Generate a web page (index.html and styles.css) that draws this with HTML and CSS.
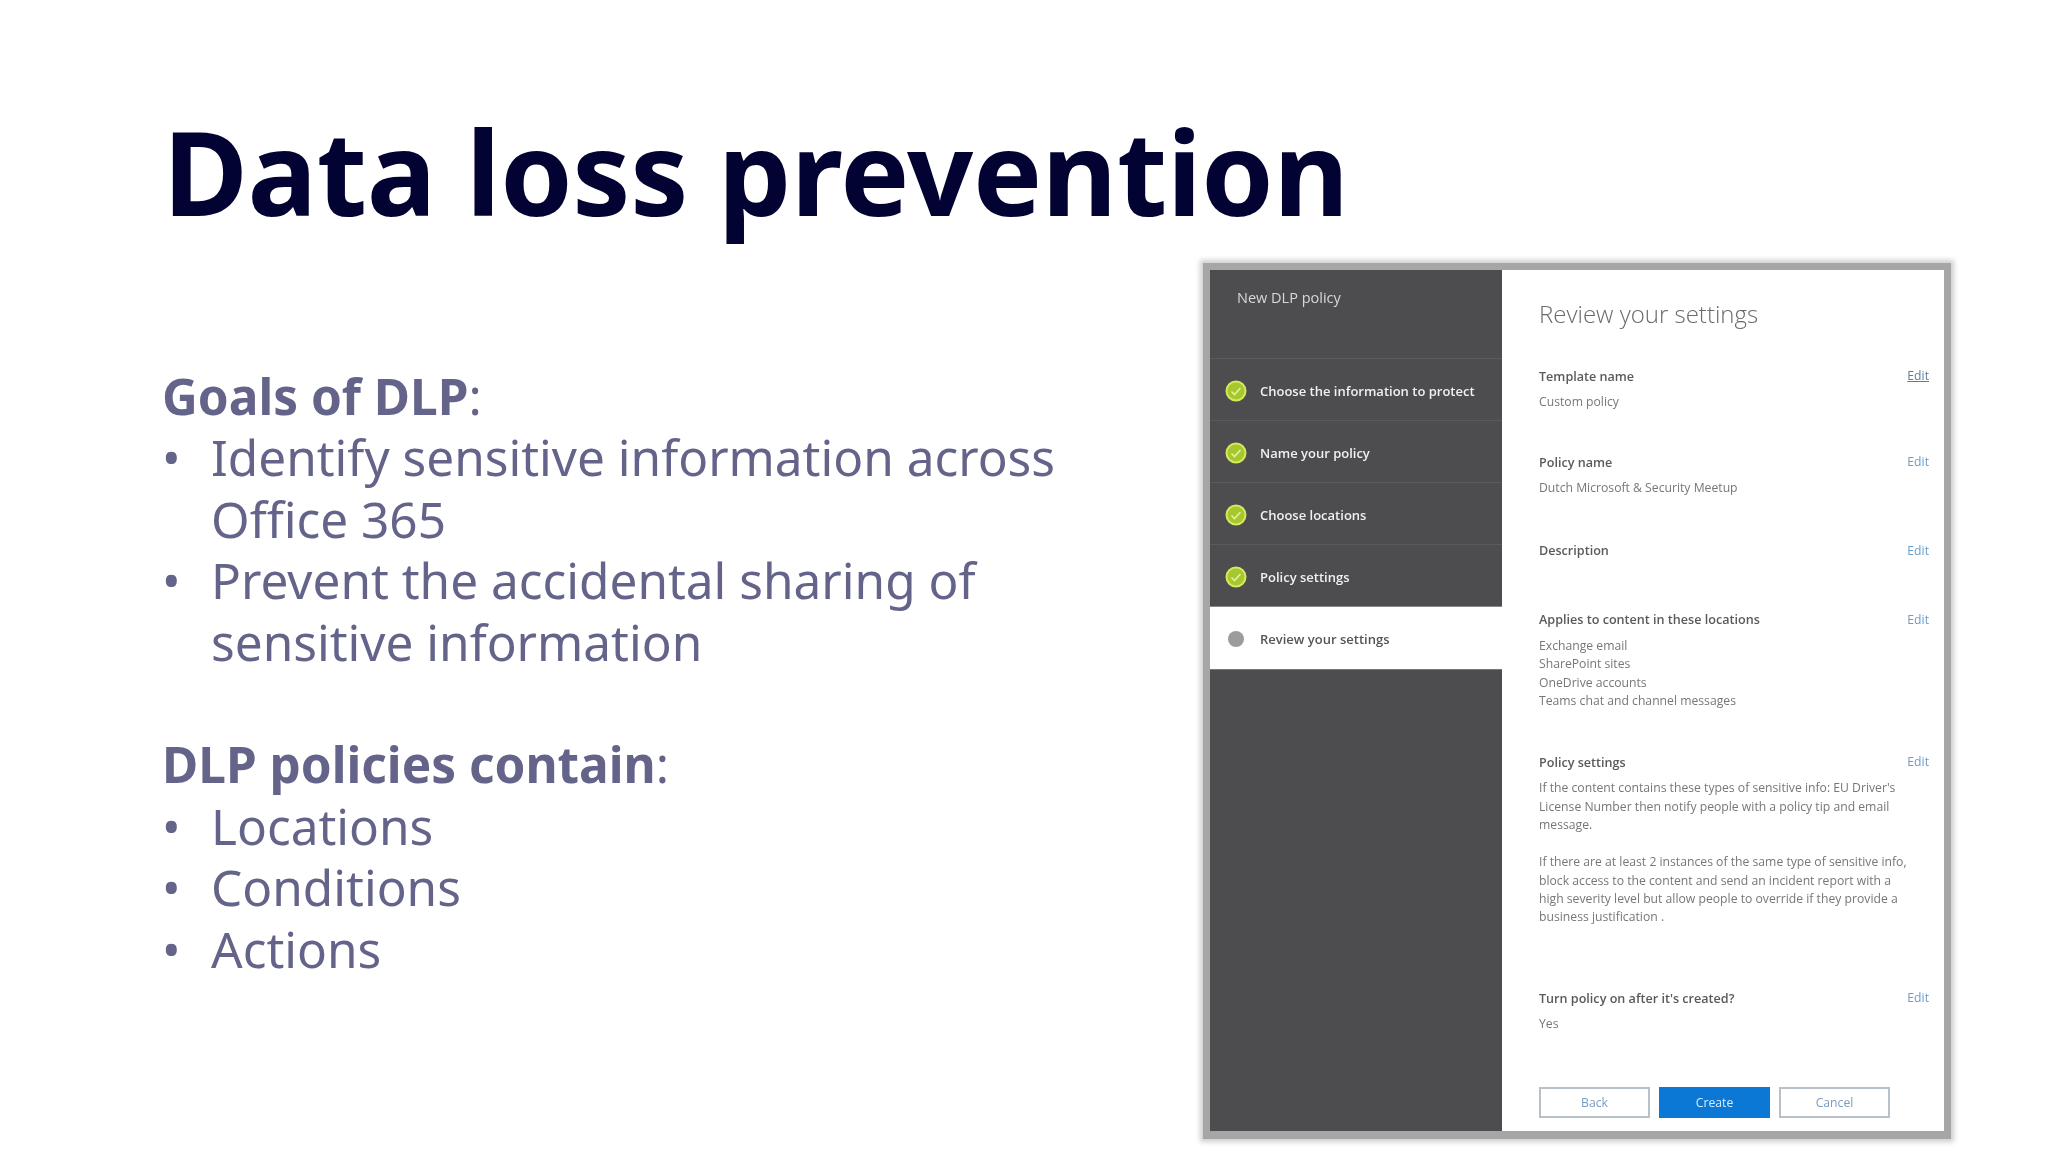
FILE: index.html
```html
<!DOCTYPE html>
<html lang="en">
<head>
<meta charset="utf-8">
<title>Data loss prevention</title>
<link rel="stylesheet" href="styles.css">
</head>
<body>
<main class="slide">
  <h1 class="title">Data loss prevention</h1>
  <div class="columns">
    <section class="copy">
      <p class="lead"><b>Goals of DLP</b>:</p>
      <ul class="points">
        <li><span>Identify sensitive information across<br>Office 365</span></li>
        <li><span>Prevent the accidental sharing of<br>sensitive information</span></li>
      </ul>
      <p class="lead spaced"><b>DLP policies contain</b>:</p>
      <ul class="points">
        <li><span>Locations</span></li>
        <li><span>Conditions</span></li>
        <li><span>Actions</span></li>
      </ul>
    </section>
    <figure class="shot">
      <div class="shot-inner">
        <aside class="wizard">
          <div class="wizard-title">New DLP policy</div>
          <div class="step"><svg class="tick" viewBox="0 0 22 22"><circle cx="11" cy="11" r="9.5"/><path d="M6.5 11.5l3 3 6-6.5"/></svg><span>Choose the information to protect</span></div>
          <div class="step"><svg class="tick" viewBox="0 0 22 22"><circle cx="11" cy="11" r="9.5"/><path d="M6.5 11.5l3 3 6-6.5"/></svg><span>Name your policy</span></div>
          <div class="step"><svg class="tick" viewBox="0 0 22 22"><circle cx="11" cy="11" r="9.5"/><path d="M6.5 11.5l3 3 6-6.5"/></svg><span>Choose locations</span></div>
          <div class="step"><svg class="tick" viewBox="0 0 22 22"><circle cx="11" cy="11" r="9.5"/><path d="M6.5 11.5l3 3 6-6.5"/></svg><span>Policy settings</span></div>
          <div class="step current"><i class="dot"></i><span>Review your settings</span></div>
        </aside>
        <div class="review">
          <h2 class="review-title">Review your settings</h2>
          <div class="block b1"><div class="row"><h3>Template name</h3><a class="hover">Edit</a></div><p>Custom policy</p></div>
          <div class="block b2"><div class="row"><h3>Policy name</h3><a>Edit</a></div><p>Dutch Microsoft &amp; Security Meetup</p></div>
          <div class="block b3"><div class="row"><h3>Description</h3><a>Edit</a></div></div>
          <div class="block b4"><div class="row"><h3>Applies to content in these locations</h3><a>Edit</a></div><p>Exchange email<br>SharePoint sites<br>OneDrive accounts<br>Teams chat and channel messages</p></div>
          <div class="block b5"><div class="row"><h3>Policy settings</h3><a>Edit</a></div><p>If the content contains these types of sensitive info: EU Driver's<br>License Number then notify people with a policy tip and email<br>message.</p><p class="gap">If there are at least 2 instances of the same type of sensitive info,<br>block access to the content and send an incident report with a<br>high severity level but allow people to override if they provide a<br>business justification .</p></div>
          <div class="block b6"><div class="row"><h3>Turn policy on after it's created?</h3><a>Edit</a></div><p>Yes</p></div>
          <div class="actions"><button class="btn">Back</button><button class="btn primary">Create</button><button class="btn">Cancel</button></div>
        </div>
      </div>
    </figure>
  </div>
</main>
</body>
</html>
```
FILE: styles.css
```css
* { box-sizing: border-box; }
html, body { margin: 0; background: #fff; }
.slide { width: 2048px; height: 1152px; overflow: hidden; padding: 101px 0 0 163px; font-family: "Noto Sans", sans-serif; }
.title { margin: 0; font-size: 116px; line-height: 140px; font-weight: 700; color: #020233; letter-spacing: -.3px; }
.columns { display: flex; justify-content: space-between; align-items: flex-start; margin-top: 22px; padding-right: 97px; }
.copy { margin: 103px 0 0 -1px; color: #64648a; font-size: 49.5px; line-height: 61.4px; }
.lead { margin: 0; }
.lead.spaced { margin-top: 61.4px; }
.points { margin: 0; padding: 0; list-style: none; }
.points li { display: flex; }
.points li::before { content: "•"; flex: none; width: 49px; }
.shot { margin: 0; width: 748px; height: 876px; padding: 7px 7px 8px; background: #a6a6a6; box-shadow: 0 0 5px 3px #cfcfcf; }
.shot-inner { display: flex; height: 100%; background: #fff; filter: blur(.7px); font-family: "Open Sans", sans-serif; }
.wizard { width: 292px; flex: none; background: #4d4d4f; color: #f0f0f0; }
.wizard-title { height: 88px; padding: 18px 0 0 27px; font-size: 14.5px; line-height: 20px; color: #d8d8d8; }
.step { height: 62px; display: flex; align-items: center; gap: 13px; padding: 2px 0 0 15px; font-size: 13px; font-weight: 600; border-top: 1px solid #5a5a5c; }
.step.current { height: 64px; background: #fff; color: #555; border-top: 1px solid #888; border-bottom: 1px solid #777; }
.tick { width: 22px; height: 22px; flex: none; }
.tick circle { fill: #a5c82e; stroke: #d6e85c; stroke-width: 2; }
.tick path { fill: none; stroke: #e6f0a0; stroke-width: 1.6; }
.dot { width: 16px; height: 16px; margin: 0 3px; border-radius: 50%; background: #9c9c9c; flex: none; }
.review { flex: 1; padding: 27px 15px 0 37px; color: #777; font-size: 12.2px; line-height: 18.4px; }
.review-title { margin: 0; font-size: 24px; line-height: 34px; font-weight: 300; color: #6a6a6a; }
.block p { margin: 7.7px 0 0; width: 380px; white-space: nowrap; }
.block p.gap { margin-top: 18.4px; }
.row { display: flex; justify-content: space-between; align-items: center; }
.row h3 { margin: 0; font-size: 12.6px; line-height: 18px; font-weight: 600; color: #5a5a5a; }
.row a { color: #6a9cc8; font-size: 12.2px; text-decoration: none; }
.row a.hover { color: #5a7ea0; text-decoration: underline; }
.b1 { margin-top: 36.3px; }
.b2 { margin-top: 41.6px; }
.b3 { margin-top: 43.9px; }
.b4 { margin-top: 50.7px; }
.b5 { margin-top: 42.8px; }
.b6 { margin-top: 62.6px; }
.actions { display: flex; gap: 9px; margin-top: 52.7px; }
.btn { width: 111px; height: 31px; padding: 0; border: 2px solid #b8c0c8; background: #fff; color: #7a9cc0; font: 12.2px "Open Sans", sans-serif; }
.btn.primary { background: #0a78d4; border-color: #0a78d4; color: #d8ecff; }
```
